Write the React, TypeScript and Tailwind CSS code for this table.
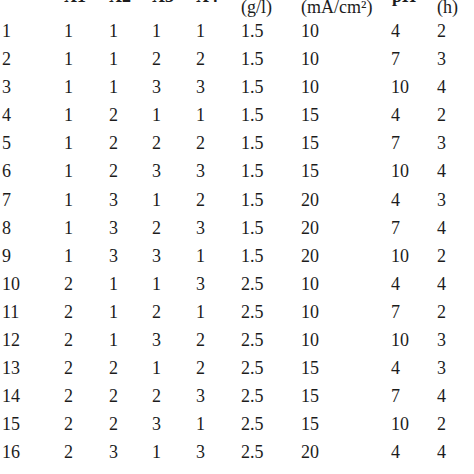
const rows: string[][] = [
	['1', '1', '1', '1', '1', '1.5', '10', '4', '2'],
	['2', '1', '1', '2', '2', '1.5', '10', '7', '3'],
	['3', '1', '1', '3', '3', '1.5', '10', '10', '4'],
	['4', '1', '2', '1', '1', '1.5', '15', '4', '2'],
	['5', '1', '2', '2', '2', '1.5', '15', '7', '3'],
	['6', '1', '2', '3', '3', '1.5', '15', '10', '4'],
	['7', '1', '3', '1', '2', '1.5', '20', '4', '3'],
	['8', '1', '3', '2', '3', '1.5', '20', '7', '4'],
	['9', '1', '3', '3', '1', '1.5', '20', '10', '2'],
	['10', '2', '1', '1', '3', '2.5', '10', '4', '4'],
	['11', '2', '1', '2', '1', '2.5', '10', '7', '2'],
	['12', '2', '1', '3', '2', '2.5', '10', '10', '3'],
	['13', '2', '2', '1', '2', '2.5', '15', '4', '3'],
	['14', '2', '2', '2', '3', '2.5', '15', '7', '4'],
	['15', '2', '2', '3', '1', '2.5', '15', '10', '2'],
	['16', '2', '3', '1', '3', '2.5', '20', '4', '4'],
];

const grid =
	'grid grid-cols-[62px_45px_43px_44px_45px_60px_91px_45px_1fr] pl-[2px]';

export default function App() {
	return (
		<div className="h-[474px] w-[474px] overflow-hidden bg-white">
			<div className="mt-[-21px] font-['Liberation_Serif',serif] text-[18px] text-[#1c1c1c]">
				{/* header, mostly cropped above the frame */}
				<div className={`${grid} h-[38px] items-center leading-[19px]`}>
					<span />
					<span className="mb-[3px] font-bold">X1</span>
					<span className="mb-[3px] font-bold">X2</span>
					<span className="mb-[3px] font-bold">X3</span>
					<span className="mb-[3px] font-bold">X4</span>
					<span className="flex flex-col whitespace-nowrap">
						<span>Conc.</span>
						<span>(g/l)</span>
					</span>
					<span className="flex flex-col whitespace-nowrap">
						<span>Current</span>
						<span>(mA/cm²)</span>
					</span>
					<span className="mb-[3px] font-bold">pH</span>
					<span className="flex flex-col whitespace-nowrap">
						<span>Time</span>
						<span>(h)</span>
					</span>
				</div>

				{rows.map((row) => (
					<div key={row[0]} className={`${grid} leading-[28.1px]`}>
						{row.map((cell, i) => (
							<span key={i} className={i === 7 ? 'ml-[-1px]' : ''}>
								{cell}
							</span>
						))}
					</div>
				))}
			</div>
		</div>
	);
}
